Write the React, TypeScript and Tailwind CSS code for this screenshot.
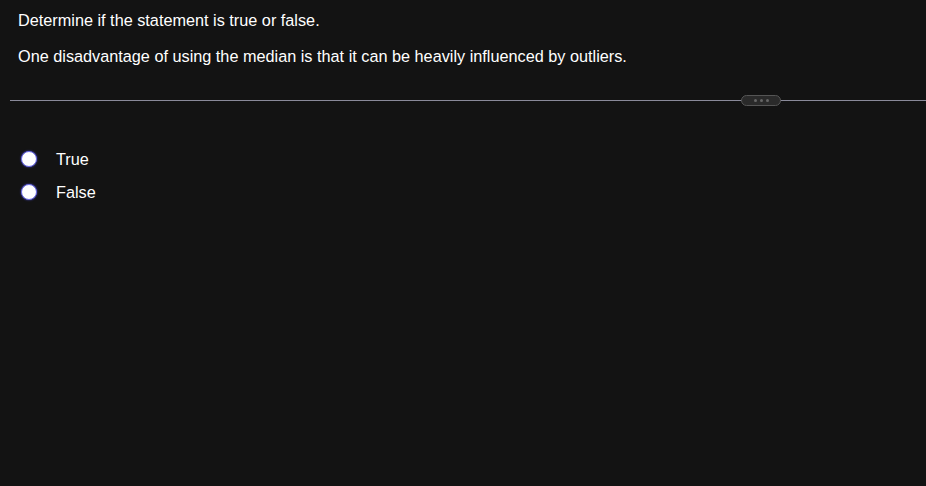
export default function App() {
  return (
    <div className="min-h-[486px] w-full bg-[#131313] text-white font-['Liberation_Sans',Arial,sans-serif]">
      <div className="px-[18px] pt-[10px]">
        <p className="text-[16.25px] leading-[20px]">Determine if the statement is true or false.</p>
        <p className="mt-[16px] text-[16.25px] leading-[20px]">
          One disadvantage of using the median is that it can be heavily influenced by outliers.
        </p>
      </div>

      {/* divider with drag handle */}
      <div className="relative ml-[10px] mt-[34px] h-px bg-[#8a8a9a]">
        <div className="absolute left-[731px] top-[-5px] flex h-[11px] w-[40px] items-center justify-center gap-[3px] rounded-full border border-[#555] bg-[#2a2a2a]">
          <span className="h-[3px] w-[3px] rounded-full bg-[#666]" />
          <span className="h-[3px] w-[3px] rounded-full bg-[#666]" />
          <span className="h-[3px] w-[3px] rounded-full bg-[#666]" />
        </div>
      </div>

      <div className="mt-[48px] flex flex-col gap-[13px] pl-[21px]">
        {['True', 'False'].map((label) => (
          <label key={label} className="flex items-center gap-[19px] text-[16.25px] leading-[20px]">
            <span className="h-[16px] w-[16px] rounded-full border border-[#6a6ae0] bg-white shadow-[0_0_2px_#4848c8]" />
            <span>{label}</span>
          </label>
        ))}
      </div>
    </div>
  )
}
